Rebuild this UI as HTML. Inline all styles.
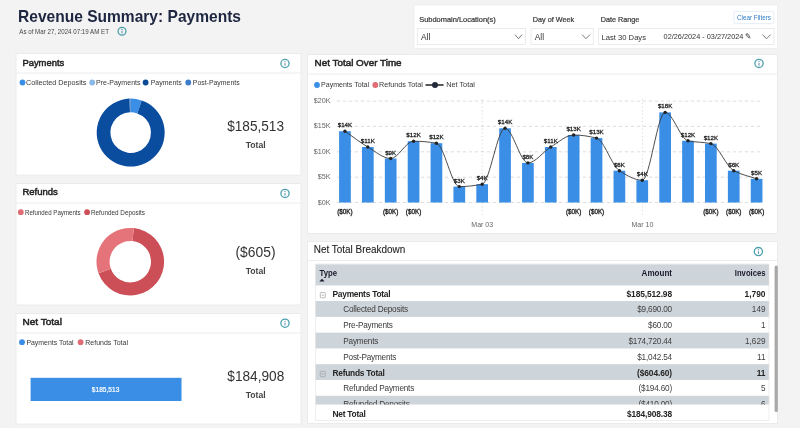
<!DOCTYPE html><html><head><meta charset="utf-8"><style>html,body{margin:0;padding:0;background:#f3f3f3;width:800px;height:428px;overflow:hidden}svg{display:block;filter:blur(0.35px)}text{font-family:"Liberation Sans",sans-serif}</style></head><body><svg width="800" height="428" viewBox="0 0 800 428" font-family="Liberation Sans, sans-serif">
<rect x="0" y="0" width="800" height="428" fill="#f3f3f3"/>
<text x="18" y="21.7" font-size="16.2" fill="#1d2540" font-weight="bold" text-anchor="start" textLength="223" lengthAdjust="spacingAndGlyphs" >Revenue Summary: Payments</text>
<text x="19.3" y="33.8" font-size="7.2" fill="#444" font-weight="normal" text-anchor="start" textLength="89.7" lengthAdjust="spacingAndGlyphs" >As of Mar 27, 2024 07:19 AM ET</text>
<circle cx="122" cy="31.2" r="3.9" fill="none" stroke="#4a9fab" stroke-width="1.3"/>
<circle cx="122" cy="29.45" r="0.6" fill="#3f7fa6"/>
<line x1="122" y1="30.81" x2="122" y2="33.34" stroke="#3f7fa6" stroke-width="0.9"/>
<rect x="414" y="5" width="363.5" height="43.5" fill="#fff" stroke="#e8e8e8" stroke-width="0.6"/>
<text x="419.2" y="22.2" font-size="7.6" fill="#333" font-weight="normal" text-anchor="start" textLength="76.5" lengthAdjust="spacingAndGlyphs" stroke="#333" stroke-width="0.2">Subdomain/Location(s)</text>
<text x="532.8" y="22.2" font-size="7.6" fill="#333" font-weight="normal" text-anchor="start" textLength="41.4" lengthAdjust="spacingAndGlyphs" stroke="#333" stroke-width="0.2">Day of Week</text>
<text x="600.7" y="22.2" font-size="7.6" fill="#333" font-weight="normal" text-anchor="start" textLength="38.5" lengthAdjust="spacingAndGlyphs" stroke="#333" stroke-width="0.2">Date Range</text>
<rect x="417.3" y="28.5" width="108.09999999999997" height="16" fill="#fff" stroke="#e3e3e3" stroke-width="0.7"/>
<rect x="531" y="28.5" width="62.200000000000045" height="16" fill="#fff" stroke="#e3e3e3" stroke-width="0.7"/>
<rect x="598.5" y="28.5" width="175.5" height="16" fill="#fff" stroke="#e3e3e3" stroke-width="0.7"/>
<text x="421" y="40.4" font-size="8.4" fill="#333" font-weight="normal" text-anchor="start" >All</text>
<text x="534.7" y="40.4" font-size="8.4" fill="#333" font-weight="normal" text-anchor="start" >All</text>
<text x="601.5" y="40.0" font-size="8" fill="#333" font-weight="normal" text-anchor="start" textLength="44.5" lengthAdjust="spacingAndGlyphs" >Last 30 Days</text>
<text x="663.6" y="39.4" font-size="7.8" fill="#333" font-weight="normal" text-anchor="start" textLength="88.4" lengthAdjust="spacingAndGlyphs" >02/26/2024 - 03/27/2024 ✎</text>
<polyline points="515,34.6 518.5,38.7 522,34.6" fill="none" stroke="#555" stroke-width="0.8"/>
<polyline points="582,34.6 586.0,38.7 590,34.6" fill="none" stroke="#555" stroke-width="0.8"/>
<polyline points="762.4,34.6 766.5,38.7 770.6,34.6" fill="none" stroke="#555" stroke-width="0.8"/>
<rect x="734" y="11.4" width="39.8" height="12.2" fill="#fff" stroke="#dbe7f2" stroke-width="0.7" rx="1"/>
<text x="737" y="20.2" font-size="6.6" fill="#2f7bc8" font-weight="normal" text-anchor="start" textLength="34" lengthAdjust="spacingAndGlyphs" >Clear Filters</text>
<rect x="16.0" y="53.5" width="285" height="121.7" fill="#fff" stroke="#ebebeb" stroke-width="1"/>
<line x1="16.5" y1="73" x2="300.5" y2="73" stroke="#ececec" stroke-width="1"/>
<text x="22.4" y="65.8" font-size="9.8" fill="#252423" font-weight="normal" text-anchor="start" textLength="41.8" lengthAdjust="spacingAndGlyphs" stroke="#252423" stroke-width="0.5">Payments</text>
<circle cx="285" cy="63.5" r="4.1" fill="none" stroke="#4a9fab" stroke-width="1.3"/>
<circle cx="285" cy="61.66" r="0.6" fill="#3f7fa6"/>
<line x1="285" y1="63.09" x2="285" y2="65.75" stroke="#3f7fa6" stroke-width="0.9"/>
<circle cx="22.5" cy="82.5" r="2.9" fill="#3a8ee6"/>
<text x="26.1" y="85.1" font-size="7.3" fill="#383838" font-weight="normal" text-anchor="start" textLength="60.4" lengthAdjust="spacingAndGlyphs" >Collected Deposits</text>
<circle cx="92.2" cy="82.5" r="2.9" fill="#8ab8e8"/>
<text x="96" y="85.1" font-size="7.3" fill="#383838" font-weight="normal" text-anchor="start" textLength="44.5" lengthAdjust="spacingAndGlyphs" >Pre-Payments</text>
<circle cx="145.6" cy="82.5" r="2.9" fill="#0d4a96"/>
<text x="150.7" y="85.1" font-size="7.3" fill="#383838" font-weight="normal" text-anchor="start" textLength="31.0" lengthAdjust="spacingAndGlyphs" >Payments</text>
<circle cx="188.3" cy="82.5" r="2.9" fill="#3d7cc9"/>
<text x="192.8" y="85.1" font-size="7.3" fill="#383838" font-weight="normal" text-anchor="start" textLength="46.8" lengthAdjust="spacingAndGlyphs" >Post-Payments</text>
<path d="M130.70,98.60 A34,34 0 0 1 141.66,100.41 L137.24,113.38 A20.3,20.3 0 0 0 130.70,112.30 Z" fill="#3a8ee6"/>
<path d="M141.66,100.41 A34,34 0 0 1 141.72,100.44 L137.28,113.40 A20.3,20.3 0 0 0 137.24,113.38 Z" fill="#8ab8e8"/>
<path d="M141.72,100.44 A34,34 0 1 1 129.50,98.62 L129.98,112.31 A20.3,20.3 0 1 0 137.28,113.40 Z" fill="#0a4c9e"/>
<path d="M129.50,98.62 A34,34 0 0 1 130.70,98.60 L130.70,112.30 A20.3,20.3 0 0 0 129.98,112.31 Z" fill="#3d7cc9"/>
<text x="255.6" y="131.1" font-size="14.8" fill="#333" font-weight="normal" text-anchor="middle" textLength="56.8" lengthAdjust="spacingAndGlyphs" >$185,513</text>
<text x="255.7" y="147.7" font-size="9" fill="#444" font-weight="bold" text-anchor="middle" textLength="20" lengthAdjust="spacingAndGlyphs" >Total</text>
<rect x="16.0" y="183.5" width="285" height="121.5" fill="#fff" stroke="#ebebeb" stroke-width="1"/>
<line x1="16.5" y1="203" x2="300.5" y2="203" stroke="#ececec" stroke-width="1"/>
<text x="22.4" y="195.3" font-size="9.8" fill="#252423" font-weight="normal" text-anchor="start" textLength="35.5" lengthAdjust="spacingAndGlyphs" stroke="#252423" stroke-width="0.5">Refunds</text>
<circle cx="285" cy="193.4" r="4.1" fill="none" stroke="#4a9fab" stroke-width="1.3"/>
<circle cx="285" cy="191.56" r="0.6" fill="#3f7fa6"/>
<line x1="285" y1="192.99" x2="285" y2="195.66" stroke="#3f7fa6" stroke-width="0.9"/>
<circle cx="20.8" cy="212.2" r="2.9" fill="#e06c75"/>
<text x="25" y="214.8" font-size="7.3" fill="#383838" font-weight="normal" text-anchor="start" textLength="55.6" lengthAdjust="spacingAndGlyphs" >Refunded Payments</text>
<circle cx="87.1" cy="212.2" r="2.9" fill="#cf4e57"/>
<text x="91.0" y="214.8" font-size="7.3" fill="#383838" font-weight="normal" text-anchor="start" textLength="54.0" lengthAdjust="spacingAndGlyphs" >Refunded Deposits</text>
<path d="M133.83,228.09 A33.8,33.8 0 1 1 98.51,273.19 L110.83,268.74 A20.7,20.7 0 1 0 132.46,241.11 Z" fill="#cc4e56"/>
<path d="M98.51,273.19 A33.8,33.8 0 0 1 133.83,228.09 L132.46,241.11 A20.7,20.7 0 0 0 110.83,268.74 Z" fill="#e5737a"/>
<text x="255.5" y="256.9" font-size="14.8" fill="#333" font-weight="normal" text-anchor="middle" textLength="40" lengthAdjust="spacingAndGlyphs" >($605)</text>
<text x="255.7" y="273.5" font-size="9" fill="#444" font-weight="bold" text-anchor="middle" textLength="20" lengthAdjust="spacingAndGlyphs" >Total</text>
<rect x="16.0" y="313.5" width="285" height="110.6" fill="#fff" stroke="#ebebeb" stroke-width="1"/>
<line x1="16.5" y1="333" x2="300.5" y2="333" stroke="#ececec" stroke-width="1"/>
<text x="22.4" y="324.8" font-size="9.8" fill="#252423" font-weight="normal" text-anchor="start" textLength="39.5" lengthAdjust="spacingAndGlyphs" stroke="#252423" stroke-width="0.5">Net Total</text>
<circle cx="285" cy="323.2" r="4.1" fill="none" stroke="#4a9fab" stroke-width="1.3"/>
<circle cx="285" cy="321.35" r="0.6" fill="#3f7fa6"/>
<line x1="285" y1="322.79" x2="285" y2="325.45" stroke="#3f7fa6" stroke-width="0.9"/>
<circle cx="22" cy="342.2" r="2.9" fill="#3a8ee6"/>
<text x="26.4" y="344.8" font-size="7.3" fill="#383838" font-weight="normal" text-anchor="start" textLength="47.2" lengthAdjust="spacingAndGlyphs" >Payments Total</text>
<circle cx="80.6" cy="342.2" r="2.9" fill="#e06c75"/>
<text x="85.3" y="344.8" font-size="7.3" fill="#383838" font-weight="normal" text-anchor="start" textLength="42.7" lengthAdjust="spacingAndGlyphs" >Refunds Total</text>
<rect x="30.6" y="377.8" width="150.9" height="23.2" fill="#3a8ee6"/>
<text x="105.6" y="392.2" font-size="7" fill="#fff" font-weight="normal" text-anchor="middle" textLength="27.5" lengthAdjust="spacingAndGlyphs" stroke="#fff" stroke-width="0.2">$185,513</text>
<text x="255.8" y="381.3" font-size="14.8" fill="#333" font-weight="normal" text-anchor="middle" textLength="57" lengthAdjust="spacingAndGlyphs" >$184,908</text>
<text x="255.7" y="398.3" font-size="9" fill="#444" font-weight="bold" text-anchor="middle" textLength="20" lengthAdjust="spacingAndGlyphs" >Total</text>
<rect x="307.5" y="54.5" width="470" height="179" fill="#fff" stroke="#ebebeb" stroke-width="1"/>
<line x1="308" y1="74" x2="777" y2="74" stroke="#ececec" stroke-width="1"/>
<text x="314.6" y="66.2" font-size="9.8" fill="#252423" font-weight="normal" text-anchor="start" textLength="87" lengthAdjust="spacingAndGlyphs" stroke="#252423" stroke-width="0.5">Net Total Over Time</text>
<circle cx="759" cy="63.4" r="4.1" fill="none" stroke="#4a9fab" stroke-width="1.3"/>
<circle cx="759" cy="61.55" r="0.6" fill="#3f7fa6"/>
<line x1="759" y1="62.99" x2="759" y2="65.66" stroke="#3f7fa6" stroke-width="0.9"/>
<circle cx="317" cy="85" r="2.9" fill="#3a8ee6"/>
<text x="321" y="87.2" font-size="7.3" fill="#383838" font-weight="normal" text-anchor="start" textLength="48.1" lengthAdjust="spacingAndGlyphs" >Payments Total</text>
<circle cx="375.3" cy="85" r="2.9" fill="#e06c75"/>
<text x="379.1" y="87.2" font-size="7.3" fill="#383838" font-weight="normal" text-anchor="start" textLength="43.7" lengthAdjust="spacingAndGlyphs" >Refunds Total</text>
<line x1="425.5" y1="85" x2="443.6" y2="85" stroke="#222" stroke-width="1.5"/>
<circle cx="435" cy="85" r="3" fill="#252a3a"/>
<text x="446.2" y="87.2" font-size="7.3" fill="#383838" font-weight="normal" text-anchor="start" textLength="28.7" lengthAdjust="spacingAndGlyphs" >Net Total</text>
<text x="330.5" y="204.5" font-size="7.2" fill="#666" font-weight="normal" text-anchor="end" >$0K</text>
<line x1="335" y1="202.5" x2="763" y2="202.5" stroke="#d4d4d4" stroke-width="0.8" stroke-dasharray="3.3,2.7" stroke-dashoffset="4.15"/>
<text x="330.5" y="179.15" font-size="7.2" fill="#666" font-weight="normal" text-anchor="end" >$5K</text>
<line x1="335" y1="177.2" x2="763" y2="177.2" stroke="#d4d4d4" stroke-width="0.8" stroke-dasharray="3.3,2.7" stroke-dashoffset="4.15"/>
<text x="330.5" y="153.8" font-size="7.2" fill="#666" font-weight="normal" text-anchor="end" >$10K</text>
<line x1="335" y1="151.8" x2="763" y2="151.8" stroke="#d4d4d4" stroke-width="0.8" stroke-dasharray="3.3,2.7" stroke-dashoffset="4.15"/>
<text x="330.5" y="128.45" font-size="7.2" fill="#666" font-weight="normal" text-anchor="end" >$15K</text>
<line x1="335" y1="126.4" x2="763" y2="126.4" stroke="#d4d4d4" stroke-width="0.8" stroke-dasharray="3.3,2.7" stroke-dashoffset="4.15"/>
<text x="330.5" y="103.1" font-size="7.2" fill="#666" font-weight="normal" text-anchor="end" >$20K</text>
<line x1="335" y1="101.1" x2="763" y2="101.1" stroke="#d4d4d4" stroke-width="0.8" stroke-dasharray="3.3,2.7" stroke-dashoffset="4.15"/>
<line x1="482.2" y1="99" x2="482.2" y2="215" stroke="#cfcfcf" stroke-width="0.8" stroke-dasharray="1.2,2.5"/>
<line x1="642.4" y1="99" x2="642.4" y2="215" stroke="#cfcfcf" stroke-width="0.8" stroke-dasharray="1.2,2.5"/>
<rect x="339.10" y="131.20" width="11.7" height="71.30" fill="#3a8ee6"/>
<rect x="361.97" y="147.00" width="11.7" height="55.50" fill="#3a8ee6"/>
<rect x="384.84" y="158.50" width="11.7" height="44.00" fill="#3a8ee6"/>
<rect x="407.71" y="141.20" width="11.7" height="61.30" fill="#3a8ee6"/>
<rect x="430.58" y="143.20" width="11.7" height="59.30" fill="#3a8ee6"/>
<rect x="453.45" y="186.60" width="11.7" height="15.90" fill="#3a8ee6"/>
<rect x="476.32" y="184.20" width="11.7" height="18.30" fill="#3a8ee6"/>
<rect x="499.19" y="128.30" width="11.7" height="74.20" fill="#3a8ee6"/>
<rect x="522.06" y="162.90" width="11.7" height="39.60" fill="#3a8ee6"/>
<rect x="544.93" y="147.00" width="11.7" height="55.50" fill="#3a8ee6"/>
<rect x="567.80" y="135.00" width="11.7" height="67.50" fill="#3a8ee6"/>
<rect x="590.67" y="138.10" width="11.7" height="64.40" fill="#3a8ee6"/>
<rect x="613.54" y="170.70" width="11.7" height="31.80" fill="#3a8ee6"/>
<rect x="636.41" y="180.20" width="11.7" height="22.30" fill="#3a8ee6"/>
<rect x="659.28" y="112.40" width="11.7" height="90.10" fill="#3a8ee6"/>
<rect x="682.15" y="140.80" width="11.7" height="61.70" fill="#3a8ee6"/>
<rect x="705.02" y="143.60" width="11.7" height="58.90" fill="#3a8ee6"/>
<rect x="727.89" y="170.70" width="11.7" height="31.80" fill="#3a8ee6"/>
<rect x="750.76" y="178.80" width="11.7" height="23.70" fill="#3a8ee6"/>
<path d="M344.95,131.20 C352.57,136.47 360.20,142.56 367.82,147.00 C375.44,151.44 383.07,158.50 390.69,158.50 C398.31,158.50 405.94,141.20 413.56,141.20 C421.18,141.20 428.81,141.93 436.43,143.20 C444.05,144.47 451.68,186.60 459.30,186.60 C466.92,186.60 474.55,185.73 482.17,184.20 C489.79,182.67 497.42,128.30 505.04,128.30 C512.66,128.30 520.29,162.90 527.91,162.90 C535.53,162.90 543.16,151.56 550.78,147.00 C558.40,142.44 566.03,135.00 573.65,135.00 C581.27,135.00 588.90,136.21 596.52,138.10 C604.14,139.99 611.77,165.80 619.39,170.70 C627.01,175.60 634.64,180.20 642.26,180.20 C649.88,180.20 657.51,112.40 665.13,112.40 C672.75,112.40 680.38,139.10 688.00,140.80 C695.62,142.50 703.25,141.91 710.87,143.60 C718.49,145.29 726.12,166.54 733.74,170.70 C741.36,174.86 748.99,176.10 756.61,178.80" fill="none" stroke="#3a3a3a" stroke-width="0.9"/>
<circle cx="344.95" cy="131.20" r="1.7" fill="#222"/>
<circle cx="367.82" cy="147.00" r="1.7" fill="#222"/>
<circle cx="390.69" cy="158.50" r="1.7" fill="#222"/>
<circle cx="413.56" cy="141.20" r="1.7" fill="#222"/>
<circle cx="436.43" cy="143.20" r="1.7" fill="#222"/>
<circle cx="459.30" cy="186.60" r="1.7" fill="#222"/>
<circle cx="482.17" cy="184.20" r="1.7" fill="#222"/>
<circle cx="505.04" cy="128.30" r="1.7" fill="#222"/>
<circle cx="527.91" cy="162.90" r="1.7" fill="#222"/>
<circle cx="550.78" cy="147.00" r="1.7" fill="#222"/>
<circle cx="573.65" cy="135.00" r="1.7" fill="#222"/>
<circle cx="596.52" cy="138.10" r="1.7" fill="#222"/>
<circle cx="619.39" cy="170.70" r="1.7" fill="#222"/>
<circle cx="642.26" cy="180.20" r="1.7" fill="#222"/>
<circle cx="665.13" cy="112.40" r="1.7" fill="#222"/>
<circle cx="688.00" cy="140.80" r="1.7" fill="#222"/>
<circle cx="710.87" cy="143.60" r="1.7" fill="#222"/>
<circle cx="733.74" cy="170.70" r="1.7" fill="#222"/>
<circle cx="756.61" cy="178.80" r="1.7" fill="#222"/>
<text x="344.95" y="127.2" font-size="6.2" fill="#222" font-weight="normal" text-anchor="middle" stroke="#222" stroke-width="0.28">$14K</text>
<text x="367.82" y="143.0" font-size="6.2" fill="#222" font-weight="normal" text-anchor="middle" stroke="#222" stroke-width="0.28">$11K</text>
<text x="390.69" y="154.5" font-size="6.2" fill="#222" font-weight="normal" text-anchor="middle" stroke="#222" stroke-width="0.28">$9K</text>
<text x="413.56" y="137.2" font-size="6.2" fill="#222" font-weight="normal" text-anchor="middle" stroke="#222" stroke-width="0.28">$12K</text>
<text x="436.43" y="139.2" font-size="6.2" fill="#222" font-weight="normal" text-anchor="middle" stroke="#222" stroke-width="0.28">$12K</text>
<text x="459.3" y="182.6" font-size="6.2" fill="#222" font-weight="normal" text-anchor="middle" stroke="#222" stroke-width="0.28">$3K</text>
<text x="482.17" y="180.2" font-size="6.2" fill="#222" font-weight="normal" text-anchor="middle" stroke="#222" stroke-width="0.28">$4K</text>
<text x="505.04" y="124.3" font-size="6.2" fill="#222" font-weight="normal" text-anchor="middle" stroke="#222" stroke-width="0.28">$14K</text>
<text x="527.91" y="158.9" font-size="6.2" fill="#222" font-weight="normal" text-anchor="middle" stroke="#222" stroke-width="0.28">$8K</text>
<text x="550.78" y="143.0" font-size="6.2" fill="#222" font-weight="normal" text-anchor="middle" stroke="#222" stroke-width="0.28">$11K</text>
<text x="573.65" y="131.0" font-size="6.2" fill="#222" font-weight="normal" text-anchor="middle" stroke="#222" stroke-width="0.28">$13K</text>
<text x="596.52" y="134.1" font-size="6.2" fill="#222" font-weight="normal" text-anchor="middle" stroke="#222" stroke-width="0.28">$13K</text>
<text x="619.39" y="166.7" font-size="6.2" fill="#222" font-weight="normal" text-anchor="middle" stroke="#222" stroke-width="0.28">$6K</text>
<text x="642.26" y="176.2" font-size="6.2" fill="#222" font-weight="normal" text-anchor="middle" stroke="#222" stroke-width="0.28">$4K</text>
<text x="665.13" y="108.4" font-size="6.2" fill="#222" font-weight="normal" text-anchor="middle" stroke="#222" stroke-width="0.28">$18K</text>
<text x="688.0" y="136.8" font-size="6.2" fill="#222" font-weight="normal" text-anchor="middle" stroke="#222" stroke-width="0.28">$12K</text>
<text x="710.87" y="139.6" font-size="6.2" fill="#222" font-weight="normal" text-anchor="middle" stroke="#222" stroke-width="0.28">$12K</text>
<text x="733.74" y="166.7" font-size="6.2" fill="#222" font-weight="normal" text-anchor="middle" stroke="#222" stroke-width="0.28">$6K</text>
<text x="756.61" y="174.8" font-size="6.2" fill="#222" font-weight="normal" text-anchor="middle" stroke="#222" stroke-width="0.28">$5K</text>
<text x="344.95" y="214.3" font-size="6.3" fill="#222" font-weight="normal" text-anchor="middle" stroke="#222" stroke-width="0.3">($0K)</text>
<text x="390.69" y="214.3" font-size="6.3" fill="#222" font-weight="normal" text-anchor="middle" stroke="#222" stroke-width="0.3">($0K)</text>
<text x="413.56" y="214.3" font-size="6.3" fill="#222" font-weight="normal" text-anchor="middle" stroke="#222" stroke-width="0.3">($0K)</text>
<text x="573.65" y="214.3" font-size="6.3" fill="#222" font-weight="normal" text-anchor="middle" stroke="#222" stroke-width="0.3">($0K)</text>
<text x="596.52" y="214.3" font-size="6.3" fill="#222" font-weight="normal" text-anchor="middle" stroke="#222" stroke-width="0.3">($0K)</text>
<text x="710.87" y="214.3" font-size="6.3" fill="#222" font-weight="normal" text-anchor="middle" stroke="#222" stroke-width="0.3">($0K)</text>
<text x="733.74" y="214.3" font-size="6.3" fill="#222" font-weight="normal" text-anchor="middle" stroke="#222" stroke-width="0.3">($0K)</text>
<text x="756.61" y="214.3" font-size="6.3" fill="#222" font-weight="normal" text-anchor="middle" stroke="#222" stroke-width="0.3">($0K)</text>
<text x="482.2" y="227.2" font-size="7" fill="#666" font-weight="normal" text-anchor="middle" >Mar 03</text>
<text x="642.4" y="227.2" font-size="7" fill="#666" font-weight="normal" text-anchor="middle" >Mar 10</text>
<rect x="307.5" y="241.5" width="470" height="182" fill="#fff" stroke="#ebebeb" stroke-width="1"/>
<line x1="308" y1="260.5" x2="777" y2="260.5" stroke="#ececec" stroke-width="1"/>
<text x="313.75" y="253.2" font-size="10.3" fill="#252423" font-weight="normal" text-anchor="start" textLength="91.5" lengthAdjust="spacingAndGlyphs" stroke="#252423" stroke-width="0.1">Net Total Breakdown</text>
<circle cx="758.4" cy="251.6" r="4.1" fill="none" stroke="#4a9fab" stroke-width="1.3"/>
<circle cx="758.4" cy="249.75" r="0.6" fill="#3f7fa6"/>
<line x1="758.4" y1="251.19" x2="758.4" y2="253.85" stroke="#3f7fa6" stroke-width="0.9"/>
<rect x="315.5" y="264.3" width="453.5" height="21.1" fill="#cdd4da"/>
<text x="319.5" y="275.6" font-size="8.6" fill="#1a1a2a" font-weight="bold" text-anchor="start" textLength="17.5" lengthAdjust="spacingAndGlyphs" >Type</text>
<path d="M319.3,281.6 L322,278.8 L324.6,281.6 Z" fill="#1a1a2a"/>
<text x="672" y="275.6" font-size="8.3" fill="#1a1a2a" font-weight="bold" text-anchor="end" textLength="30.4" lengthAdjust="spacingAndGlyphs" >Amount</text>
<text x="765.5" y="275.6" font-size="8.3" fill="#1a1a2a" font-weight="bold" text-anchor="end" textLength="30.7" lengthAdjust="spacingAndGlyphs" >Invoices</text>
<defs><clipPath id="tc"><rect x="315" y="285.3" width="455" height="119.3"/></clipPath></defs>
<g clip-path="url(#tc)">
<rect x="320.3" y="292.50" width="5" height="5.3" fill="none" stroke="#a0a0a0" stroke-width="0.7" rx="0.8"/>
<line x1="321.6" y1="295.15" x2="324" y2="295.15" stroke="#8a8a8a" stroke-width="0.6"/>
<text x="332.5" y="296.7" font-size="8.4" fill="#252423" font-weight="bold" text-anchor="start" letter-spacing="-0.25">Payments Total</text>
<text x="672" y="296.7" font-size="8.4" fill="#252423" font-weight="bold" text-anchor="end" letter-spacing="-0.1">$185,512.98</text>
<text x="765.5" y="296.7" font-size="8.4" fill="#252423" font-weight="bold" text-anchor="end" >1,790</text>
<rect x="315.5" y="301.08" width="453.5" height="15.78" fill="#cdd4da"/>
<text x="343.3" y="312.48" font-size="8.2" fill="#3a3a3a" font-weight="normal" text-anchor="start" letter-spacing="-0.2">Collected Deposits</text>
<text x="672" y="312.48" font-size="8.2" fill="#3f3f3f" font-weight="normal" text-anchor="end" letter-spacing="-0.18">$9,690.00</text>
<text x="765.5" y="312.48" font-size="8.2" fill="#3f3f3f" font-weight="normal" text-anchor="end" >149</text>
<text x="343.3" y="328.26" font-size="8.2" fill="#3a3a3a" font-weight="normal" text-anchor="start" letter-spacing="-0.2">Pre-Payments</text>
<text x="672" y="328.26" font-size="8.2" fill="#3f3f3f" font-weight="normal" text-anchor="end" letter-spacing="-0.18">$60.00</text>
<text x="765.5" y="328.26" font-size="8.2" fill="#3f3f3f" font-weight="normal" text-anchor="end" >1</text>
<rect x="315.5" y="332.64" width="453.5" height="15.78" fill="#cdd4da"/>
<text x="343.3" y="344.04" font-size="8.2" fill="#3a3a3a" font-weight="normal" text-anchor="start" letter-spacing="-0.2">Payments</text>
<text x="672" y="344.04" font-size="8.2" fill="#3f3f3f" font-weight="normal" text-anchor="end" letter-spacing="-0.18">$174,720.44</text>
<text x="765.5" y="344.04" font-size="8.2" fill="#3f3f3f" font-weight="normal" text-anchor="end" >1,629</text>
<text x="343.3" y="359.82" font-size="8.2" fill="#3a3a3a" font-weight="normal" text-anchor="start" letter-spacing="-0.2">Post-Payments</text>
<text x="672" y="359.82" font-size="8.2" fill="#3f3f3f" font-weight="normal" text-anchor="end" letter-spacing="-0.18">$1,042.54</text>
<text x="765.5" y="359.82" font-size="8.2" fill="#3f3f3f" font-weight="normal" text-anchor="end" >11</text>
<rect x="315.5" y="364.20" width="453.5" height="15.78" fill="#cdd4da"/>
<rect x="320.3" y="371.40" width="5" height="5.3" fill="none" stroke="#a0a0a0" stroke-width="0.7" rx="0.8"/>
<line x1="321.6" y1="374.05" x2="324" y2="374.05" stroke="#8a8a8a" stroke-width="0.6"/>
<text x="332.5" y="375.6" font-size="8.4" fill="#252423" font-weight="bold" text-anchor="start" letter-spacing="-0.25">Refunds Total</text>
<text x="672" y="375.6" font-size="8.4" fill="#252423" font-weight="bold" text-anchor="end" letter-spacing="-0.1">($604.60)</text>
<text x="765.5" y="375.6" font-size="8.4" fill="#252423" font-weight="bold" text-anchor="end" >11</text>
<text x="343.3" y="391.38" font-size="8.2" fill="#3a3a3a" font-weight="normal" text-anchor="start" letter-spacing="-0.2">Refunded Payments</text>
<text x="672" y="391.38" font-size="8.2" fill="#3f3f3f" font-weight="normal" text-anchor="end" letter-spacing="-0.18">($194.60)</text>
<text x="765.5" y="391.38" font-size="8.2" fill="#3f3f3f" font-weight="normal" text-anchor="end" >5</text>
<rect x="315.5" y="395.76" width="453.5" height="15.78" fill="#cdd4da"/>
<text x="343.3" y="407.16" font-size="8.2" fill="#3a3a3a" font-weight="normal" text-anchor="start" letter-spacing="-0.2">Refunded Deposits</text>
<text x="672" y="407.16" font-size="8.2" fill="#3f3f3f" font-weight="normal" text-anchor="end" letter-spacing="-0.18">($410.00)</text>
<text x="765.5" y="407.16" font-size="8.2" fill="#3f3f3f" font-weight="normal" text-anchor="end" >6</text>
</g>
<text x="332.5" y="417.0" font-size="8.4" fill="#252423" font-weight="bold" text-anchor="start" letter-spacing="-0.25">Net Total</text>
<text x="672" y="417.0" font-size="8.4" fill="#252423" font-weight="bold" text-anchor="end" letter-spacing="-0.15">$184,908.38</text>
<rect x="315.5" y="264" width="453.5" height="156.5" fill="none" stroke="#e3e3e3" stroke-width="0.6"/>
<rect x="774.6" y="265.5" width="3.2" height="146.5" rx="1.5" fill="#a8a8a8"/>
</svg></body></html>
